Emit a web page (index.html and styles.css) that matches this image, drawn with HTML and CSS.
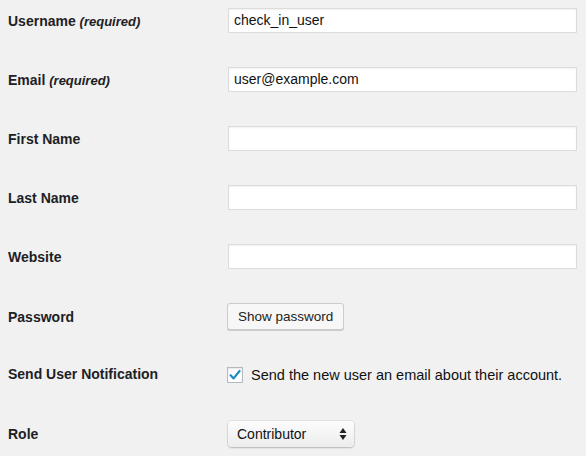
FILE: index.html
```html
<!DOCTYPE html>
<html>
<head>
<meta charset="utf-8">
<link rel="stylesheet" href="styles.css">
</head>
<body>
<form class="form">
  <div class="row">
    <label class="label">Username <em class="req">(required)</em></label>
    <div class="field"><div class="input">check_in_user</div></div>
  </div>
  <div class="row">
    <label class="label">Email <em class="req">(required)</em></label>
    <div class="field"><div class="input">user@example.com</div></div>
  </div>
  <div class="row">
    <label class="label">First Name</label>
    <div class="field"><div class="input"></div></div>
  </div>
  <div class="row">
    <label class="label">Last Name</label>
    <div class="field"><div class="input"></div></div>
  </div>
  <div class="row">
    <label class="label">Website</label>
    <div class="field"><div class="input"></div></div>
  </div>
  <div class="row">
    <label class="label">Password</label>
    <div class="field"><span class="button">Show password</span></div>
  </div>
  <div class="row">
    <label class="label label-up">Send User Notification</label>
    <div class="field check-field">
      <span class="checkbox">
        <svg width="14" height="14" viewBox="0 0 14 14"><path d="M2.6 7.2 L5.6 10.4 L11.6 3" fill="none" stroke="#1e8cbe" stroke-width="2.2" stroke-linecap="round" stroke-linejoin="round"/></svg>
      </span>
      <span class="check-text">Send the new user an email about their account.</span>
    </div>
  </div>
  <div class="row">
    <label class="label">Role</label>
    <div class="field">
      <span class="select">
        <span class="select-text">Contributor</span>
        <svg class="arrows" width="8" height="14" viewBox="0 0 8 14"><path d="M4 1 L7.5 6 L0.5 6 Z M4 13 L7.5 8 L0.5 8 Z" fill="#222"/></svg>
      </span>
    </div>
  </div>
</form>
</body>
</html>
```
FILE: styles.css
```css
html, body {
  margin: 0;
  padding: 0;
  background: #f1f1f1;
}
body {
  font-family: "Liberation Sans", Arial, Helvetica, sans-serif;
  color: #23282d;
  width: 586px;
  height: 456px;
  overflow: hidden;
}
.form {
  display: flex;
  flex-direction: column;
  gap: 34px;
  padding-top: 8px;
}
.row {
  display: grid;
  grid-template-columns: 228px 1fr;
  align-items: center;
  height: 25px;
}
.label {
  padding-left: 8px;
  font-weight: bold;
  font-size: 14px;
  color: #1d2125;
  white-space: nowrap;
}
.label-up {
  margin-top: -2px;
}
.req {
  font-style: italic;
  font-size: 13px;
}
.field {
  display: flex;
  align-items: center;
}
.input {
  box-sizing: border-box;
  width: 349px;
  height: 25px;
  background: #fff;
  border: 1px solid #dcdcdc;
  box-shadow: inset 0 1px 2px rgba(0,0,0,0.06);
  font-size: 14px;
  line-height: 23px;
  padding-left: 5px;
  color: #111;
}
.button {
  box-sizing: border-box;
  height: 27px;
  width: 117px;
  margin-left: -1px;
  border: 1px solid #cccccc;
  border-radius: 3px;
  background: #f7f7f7;
  box-shadow: 0 1px 0 #cccccc;
  font-size: 13.5px;
  line-height: 25px;
  padding-left: 10px;
  color: #222;
}
.check-field {
  gap: 8px;
}
.checkbox {
  box-sizing: border-box;
  width: 16px;
  height: 16px;
  margin-left: -1px;
  border: 1px solid #b4b9be;
  background: #fff;
  box-shadow: inset 0 1px 2px rgba(0,0,0,0.1);
  display: flex;
  align-items: center;
  justify-content: center;
}
.check-text {
  font-size: 14.5px;
  color: #111;
  white-space: nowrap;
}
.select {
  box-sizing: border-box;
  width: 126px;
  height: 26px;
  border-radius: 4px;
  background: linear-gradient(#fdfdfd, #ececec);
  box-shadow: 0 0 0 1px rgba(0,0,0,0.06), 0 1px 2px rgba(0,0,0,0.2);
  display: flex;
  align-items: center;
  justify-content: space-between;
  padding: 0 7px 0 9px;
}
.select-text {
  font-size: 14px;
  color: #111;
}
```
